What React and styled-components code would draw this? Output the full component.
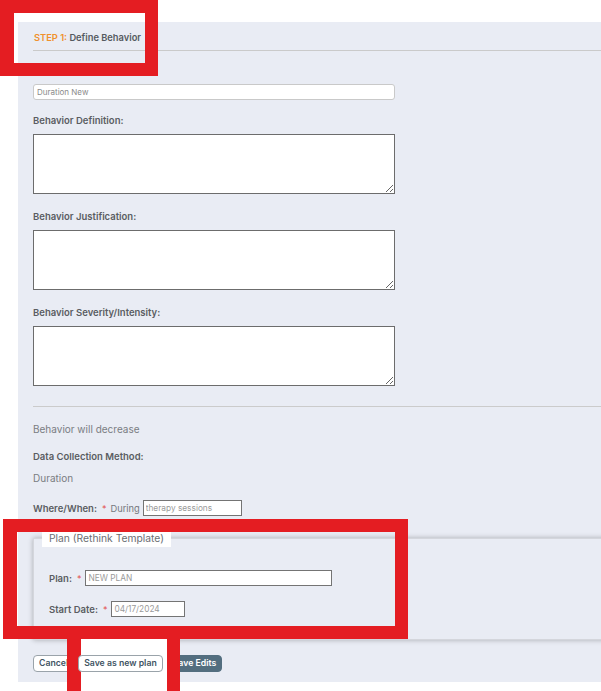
import React from "react";
import styled, { createGlobalStyle } from "styled-components";

const GlobalStyle = createGlobalStyle`
	html, body {
		margin: 0;
		padding: 0;
		background: #ffffff;
		overflow: hidden;
	}
	body {
		font-family: Inter, "Liberation Sans", sans-serif;
	}
`;

const Page = styled.div`
	position: relative;
	width: 601px;
	height: 691px;
	overflow: hidden;
`;

const Panel = styled.main`
	margin: 22px 0 0 18px;
	width: 640px;
	background-color: #e9ecf4;
	padding: 0 0 10px 15px;
	box-sizing: border-box;
	display: flex;
	flex-direction: column;
	align-items: flex-start;
`;

const Header = styled.div`
	align-self: stretch;
	height: 29px;
	box-sizing: border-box;
	padding: 10px 0 0 1px;
	border-bottom: 1px solid #cacaca;
	font-size: 9.3px;
	line-height: 12px;
	font-weight: 600;
	color: #555a60;
`;

const Step = styled.span`
	color: #f0912c;
`;

const NameInput = styled.input`
	margin-top: 33px;
	width: 362px;
	height: 16px;
	box-sizing: border-box;
	border: 1px solid #c9c9c9;
	border-radius: 3px;
	background: #ffffff;
	padding: 0 3px;
	font-family: inherit;
	font-size: 8px;
	color: #8a8a8a;
	outline: none;
`;

const Label = styled.label`
	display: block;
	margin-top: ${props => props.top || 17}px;
	font-size: 9.5px;
	line-height: 12px;
	font-weight: 600;
	color: #5a5d62;
`;

const Area = styled.textarea`
	margin-top: 7px;
	width: 362px;
	height: 60px;
	box-sizing: border-box;
	border: 1px solid #6c6c6c;
	border-radius: 0;
	background: #ffffff;
	resize: both;
	outline: none;
`;

const Divider = styled.hr`
	align-self: stretch;
	margin: 20px 0 0;
	border: none;
	border-top: 1px solid #cbcbcb;
	height: 0;
`;

const Text = styled.div`
	margin-top: ${props => props.top}px;
	font-size: 10px;
	line-height: 14px;
	color: #7a7d82;
`;

const Row = styled.div`
	display: flex;
	align-items: center;
	margin-top: ${props => props.top}px;
	height: 16px;
	font-size: 9.5px;
`;

const RowLabel = styled.span`
	font-weight: 600;
	color: #5a5d62;
`;

const Star = styled.span`
	color: #e2504f;
	margin: 0 4px 0 5px;
	font-size: 9px;
`;

const Plain = styled.span`
	font-size: 9.3px;
	color: #75787d;
	margin-right: 3px;
`;

const BoxInput = styled.input`
	width: ${props => props.w}px;
	height: 16px;
	box-sizing: border-box;
	border: 1px solid #747474;
	border-radius: 0;
	background: #ffffff;
	padding: 0 2px;
	font-family: inherit;
	font-size: 8.3px;
	color: #9a9a9a;
	outline: none;
`;

const Fieldset = styled.fieldset`
	align-self: stretch;
	margin: 14px 0 0;
	padding: 0 0 22px 15px;
	border: 1px solid #d4d6dc;
	box-shadow: 0 0 5px rgba(0, 0, 0, 0.28);
	min-width: 0;
`;

const Legend = styled.legend`
	margin-left: -7px;
	padding: 0 7px;
	background: #ffffff;
	font-size: 10.3px;
	line-height: 17px;
	color: #6b6e73;
`;

const ButtonBar = styled.div`
	display: flex;
	gap: 4px;
	margin-top: 15px;
`;

const Button = styled.button`
	position: relative;
	z-index: ${props => (props.front ? 3 : 0)};
	height: 17px;
	padding: 0 5px;
	border-radius: 4px;
	border: 1px solid ${props => (props.primary ? "#536e7f" : "#9aa3aa")};
	background: ${props => (props.primary ? "#536e7f" : "#ffffff")};
	color: ${props => (props.primary ? "#ffffff" : "#3f5463")};
	font-family: inherit;
	font-size: 8.7px;
	font-weight: 600;
	line-height: 15px;
`;

const Mark = styled.div`
	position: absolute;
	z-index: 2;
	left: ${props => props.x}px;
	top: ${props => props.y}px;
	width: ${props => props.w}px;
	height: ${props => props.h}px;
	box-sizing: border-box;
	border: 13px solid #e41d22;
	border-left-width: 14px;
	background: ${props => props.fill || "transparent"};
	pointer-events: none;
`;

const App = () => (
	<Page>
		<GlobalStyle />
		<Panel>
			<Header>
				<Step>STEP 1:</Step> Define Behavior
			</Header>
			<NameInput defaultValue="Duration New" />

			<Label top={15}>Behavior Definition:</Label>
			<Area readOnly />
			<Label>Behavior Justification:</Label>
			<Area readOnly />
			<Label>Behavior Severity/Intensity:</Label>
			<Area readOnly />

			<Divider />
			<Text top={15}>Behavior will decrease</Text>
			<Label top={15}>Data Collection Method:</Label>
			<Text top={8}>Duration</Text>
			<Row top={15}>
				<RowLabel>Where/When:</RowLabel>
				<Star>*</Star>
				<Plain>During</Plain>
				<BoxInput w={99} defaultValue="therapy sessions" />
			</Row>

			<Fieldset>
				<Legend>Plan (Rethink Template)</Legend>
				<Row top={23}>
					<RowLabel>Plan:</RowLabel>
					<Star>*</Star>
					<BoxInput w={247} defaultValue="NEW PLAN" />
				</Row>
				<Row top={15}>
					<RowLabel>Start Date:</RowLabel>
					<Star>*</Star>
					<BoxInput w={74} defaultValue="04/17/2024" />
				</Row>
			</Fieldset>

			<ButtonBar>
				<Button>Cancel</Button>
				<Button front>Save as new plan</Button>
				<Button primary>Save Edits</Button>
			</ButtonBar>
		</Panel>

		<Mark x={0} y={0} w={158} h={76} />
		<Mark x={3} y={519} w={405} h={120} />
		<Mark x={67} y={626} w={113} h={80} fill="#ffffff" />
	</Page>
);

export default App;
